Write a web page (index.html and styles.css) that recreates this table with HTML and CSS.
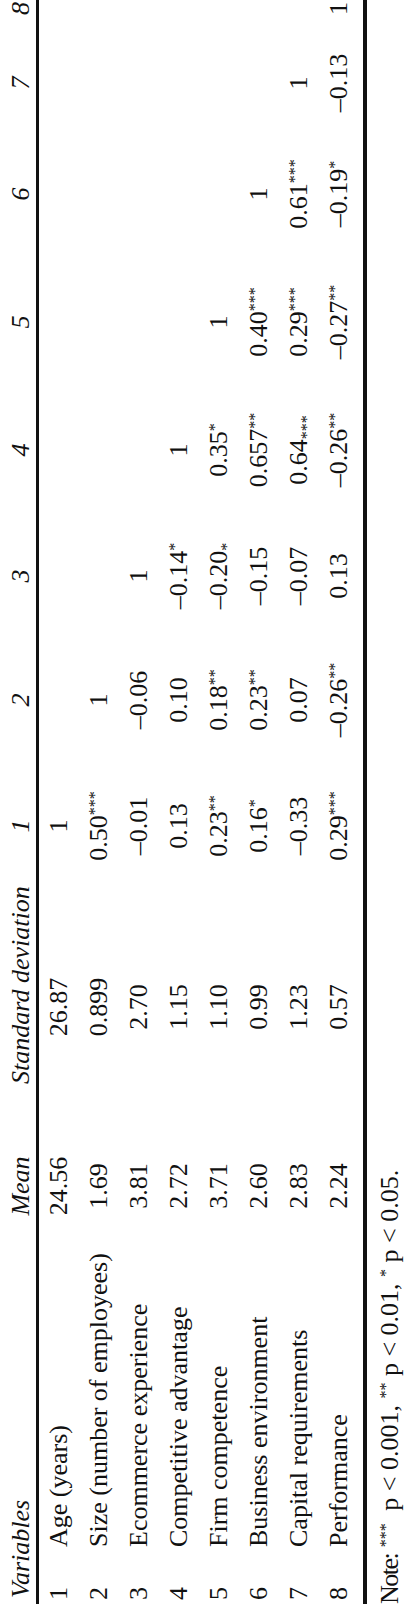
FILE: index.html
```html
<!DOCTYPE html>
<html lang="en">
<head>
    <meta charset="UTF-8">
    <meta name="viewport" content="width=device-width, initial-scale=1.0">
    <title>Correlation matrix</title>
    <link rel="stylesheet" href="styles.css">
</head>
<body>
    <div class="page">
        <table class="corr">
            <colgroup>
                <col class="c-idx">
                <col class="c-name">
                <col class="c-mean">
                <col class="c-sd">
                <col class="c-w128">
                <col class="c-w124">
                <col class="c-w124">
                <col class="c-w128">
                <col class="c-w128">
                <col class="c-w128">
                <col class="c-w94">
                <col class="c-end">
            </colgroup>
            <thead>
                <tr>
                    <th colspan="2" class="left">Variables</th>
                    <th>Mean</th>
                    <th class="sd-head">Standard deviation</th>
                    <th>1</th>
                    <th>2</th>
                    <th>3</th>
                    <th>4</th>
                    <th>5</th>
                    <th>6</th>
                    <th>7</th>
                    <th class="end">8</th>
                </tr>
            </thead>
            <tbody>
                <tr>
                    <td class="idx">1</td><td class="name">Age (years)</td>
                    <td>24.56</td><td>26.87</td>
                    <td>1</td><td></td><td></td><td></td><td></td><td></td><td></td><td class="end"></td>
                </tr>
                <tr>
                    <td class="idx">2</td><td class="name">Size (number of employees)</td>
                    <td>1.69</td><td>0.899</td>
                    <td>0.50<sup>***</sup></td><td>1</td><td></td><td></td><td></td><td></td><td></td><td class="end"></td>
                </tr>
                <tr>
                    <td class="idx">3</td><td class="name">Ecommerce experience</td>
                    <td>3.81</td><td>2.70</td>
                    <td>–0.01</td><td>–0.06</td><td>1</td><td></td><td></td><td></td><td></td><td class="end"></td>
                </tr>
                <tr>
                    <td class="idx">4</td><td class="name">Competitive advantage</td>
                    <td>2.72</td><td>1.15</td>
                    <td>0.13</td><td>0.10</td><td>–0.14<sup>*</sup></td><td>1</td><td></td><td></td><td></td><td class="end"></td>
                </tr>
                <tr>
                    <td class="idx">5</td><td class="name">Firm competence</td>
                    <td>3.71</td><td>1.10</td>
                    <td>0.23<sup>**</sup></td><td>0.18<sup>**</sup></td><td>–0.20<sub>*</sub></td><td>0.35<sup>*</sup></td><td>1</td><td></td><td></td><td class="end"></td>
                </tr>
                <tr>
                    <td class="idx">6</td><td class="name">Business environment</td>
                    <td>2.60</td><td>0.99</td>
                    <td>0.16<sup>*</sup></td><td>0.23<sup>**</sup></td><td>–0.15</td><td>0.657<sup>**</sup></td><td>0.40<sup>***</sup></td><td>1</td><td></td><td class="end"></td>
                </tr>
                <tr>
                    <td class="idx">7</td><td class="name">Capital requirements</td>
                    <td>2.83</td><td>1.23</td>
                    <td>–0.33</td><td>0.07</td><td>–0.07</td><td>0.64<sub>***</sub></td><td>0.29<sup>***</sup></td><td>0.61<sup>***</sup></td><td>1</td><td class="end"></td>
                </tr>
                <tr class="last">
                    <td class="idx">8</td><td class="name">Performance</td>
                    <td>2.24</td><td>0.57</td>
                    <td>0.29<sup>***</sup></td><td>–0.26<sup>**</sup></td><td>0.13</td><td>–0.26<sup>**</sup></td><td>–0.27<sup>**</sup></td><td>–0.19<sup>*</sup></td><td>–0.13</td><td class="end">1</td>
                </tr>
            </tbody>
        </table>
        <p class="note"><span class="note-label">Note:</span> <sup class="gap">***</sup> p &lt; 0.001, <sup>**</sup> p &lt; 0.01, <sup>*</sup> p &lt; 0.05.</p>
    </div>
</body>
</html>
```

FILE: styles.css
```css
html, body {
    margin: 0;
    padding: 0;
    overflow: hidden;
    background: #fff;
}
body {
    width: 405px;
    height: 1604px;
}
/* the table is printed sideways: lay it out flat, then turn it */
.page {
    width: 1604px;
    height: 405px;
    overflow: hidden;
    transform-origin: 0 0;
    transform: translateY(1604px) rotate(-90deg);
    font-family: "Liberation Serif", "Times New Roman", serif;
    font-size: 26px;
    color: #111;
}
.corr {
    table-layout: fixed;
    width: 1604px;
    border-collapse: separate;
    border-spacing: 0;
}
.c-idx { width: 50px; }
.c-name { width: 306px; }
.c-mean { width: 124px; }
.c-sd { width: 234px; }
.c-w128 { width: 128px; }
.c-w124 { width: 124px; }
.c-w94 { width: 94px; }
.c-end { width: 36px; }
th {
    font-style: italic;
    font-weight: normal;
    line-height: 30px;
    padding: 6px 0 0;
    text-align: center;
    white-space: nowrap;
    border-bottom: 3px solid #111;
}
th.left {
    text-align: left;
    padding-left: 6px;
}
th.sd-head {
    text-align: left;
    padding-left: 40px;
    overflow: visible;
}
td {
    line-height: 40px;
    padding: 0;
    text-align: center;
    white-space: nowrap;
}
th.end, td.end {
    text-align: right;
    padding-right: 2px;
}
td.idx {
    text-align: left;
    padding-left: 4px;
}
td.name {
    text-align: left;
    padding-left: 7px;
}
tr.last td {
    padding-bottom: 4px;
    border-bottom: 4px solid #111;
}
sup, sub {
    font-size: 16px;
    line-height: 0;
}
sup {
    vertical-align: 7px;
}
sub {
    vertical-align: -5px;
}
.note {
    margin: 0;
    padding-top: 7px;
    line-height: 32px;
    white-space: nowrap;
}
.note-label {
    letter-spacing: -1.5px;
}
.note sup.gap {
    margin-right: 6px;
}
```
